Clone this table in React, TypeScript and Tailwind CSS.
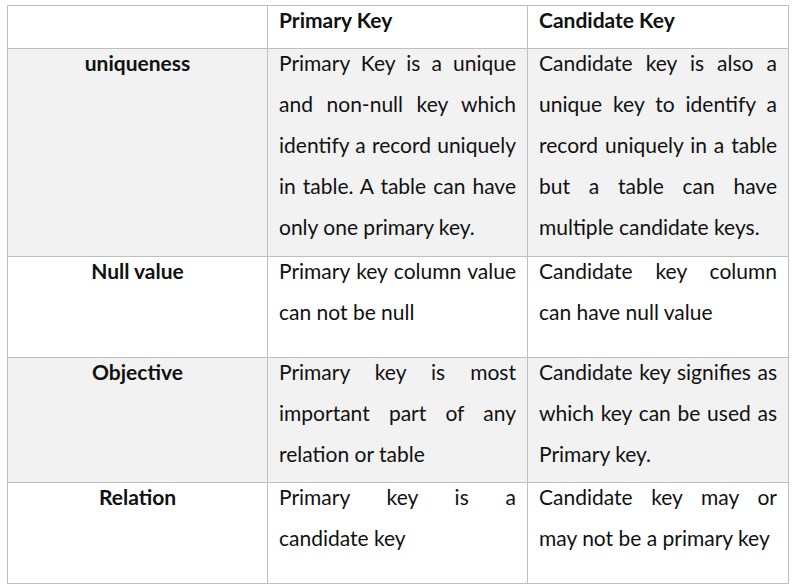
type Row = {
  label: string;
  primary: string[];
  candidate: string[];
  height: string;
  shaded: boolean;
};

const rows: Row[] = [
  {
    label: 'uniqueness',
    primary: [
      'Primary Key is a unique',
      'and non-null key which',
      'identify a record uniquely',
      'in table. A table can have',
      'only one primary key.',
    ],
    candidate: [
      'Candidate key is also a',
      'unique key to identify a',
      'record uniquely in a table',
      'but a table can have',
      'multiple candidate keys.',
    ],
    height: 'h-[208px]',
    shaded: true,
  },
  {
    label: 'Null value',
    primary: ['Primary key column value', 'can not be null'],
    candidate: ['Candidate key column', 'can have null value'],
    height: 'h-[101px]',
    shaded: false,
  },
  {
    label: 'Objective',
    primary: ['Primary key is most', 'important part of any', 'relation or table'],
    candidate: ['Candidate key signifies as', 'which key can be used as', 'Primary key.'],
    height: 'h-[125px]',
    shaded: true,
  },
  {
    label: 'Relation',
    primary: ['Primary key is a', 'candidate key'],
    candidate: ['Candidate key may or', 'may not be a primary key'],
    height: 'h-[101px]',
    shaded: false,
  },
];

function Lines({ lines }: { lines: string[] }) {
  return (
    <div className="-mt-[7px]">
      {lines.map((line, i) =>
        i < lines.length - 1 ? (
          <div key={i} className="whitespace-nowrap text-justify [text-align-last:justify]">
            {line}
          </div>
        ) : (
          <div key={i} className="whitespace-nowrap">
            {line}
          </div>
        ),
      )}
    </div>
  );
}

export default function App() {
  return (
    <div
      className="min-h-screen bg-white pl-[7px] pt-[5px] text-[#111] text-[21px] leading-[41px]"
      style={{ fontFamily: 'Lato, "Open Sans", sans-serif' }}
    >
      <table className="w-[781px] table-fixed border-collapse border border-[#bfbfbf]">
        <colgroup>
          <col className="w-[260px]" />
          <col className="w-[260px]" />
          <col className="w-[261px]" />
        </colgroup>
        <thead>
          <tr className="h-[43px] bg-white">
            <th className="border border-[#bfbfbf] px-[11px] align-top"></th>
            <th className="border border-[#bfbfbf] px-[11px] text-left align-top font-bold">
              <div className="-mt-[7px]">Primary Key</div>
            </th>
            <th className="border border-[#bfbfbf] px-[11px] text-left align-top font-bold">
              <div className="-mt-[7px]">Candidate Key</div>
            </th>
          </tr>
        </thead>
        <tbody>
          {rows.map((row) => (
            <tr key={row.label} className={`${row.height} ${row.shaded ? 'bg-[#f2f2f2]' : 'bg-white'}`}>
              <td className="border border-[#bfbfbf] px-[11px] text-center align-top font-bold">
                <div className="-mt-[7px]">{row.label}</div>
              </td>
              <td className="border border-[#bfbfbf] px-[11px] align-top">
                <Lines lines={row.primary} />
              </td>
              <td className="border border-[#bfbfbf] px-[11px] align-top">
                <Lines lines={row.candidate} />
              </td>
            </tr>
          ))}
        </tbody>
      </table>
    </div>
  );
}
